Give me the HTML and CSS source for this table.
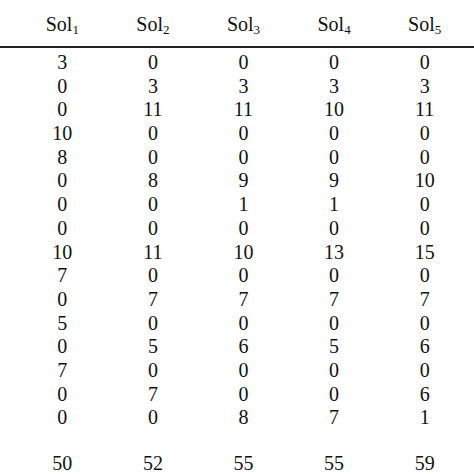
FILE: index.html
```html
<!DOCTYPE html>
<html>
<head>
<meta charset="utf-8">
<link rel="stylesheet" href="styles.css">
</head>
<body>
<div class="table">
  <div class="row head">
    <span></span>
    <span>Sol<sub>1</sub></span>
    <span>Sol<sub>2</sub></span>
    <span>Sol<sub>3</sub></span>
    <span>Sol<sub>4</sub></span>
    <span>Sol<sub>5</sub></span>
  </div>
  <div class="body">
    <div class="row"><span></span><span>3</span><span>0</span><span>0</span><span>0</span><span>0</span></div>
    <div class="row"><span></span><span>0</span><span>3</span><span>3</span><span>3</span><span>3</span></div>
    <div class="row"><span></span><span>0</span><span>11</span><span>11</span><span>10</span><span>11</span></div>
    <div class="row"><span></span><span>10</span><span>0</span><span>0</span><span>0</span><span>0</span></div>
    <div class="row"><span></span><span>8</span><span>0</span><span>0</span><span>0</span><span>0</span></div>
    <div class="row"><span></span><span>0</span><span>8</span><span>9</span><span>9</span><span>10</span></div>
    <div class="row"><span></span><span>0</span><span>0</span><span>1</span><span>1</span><span>0</span></div>
    <div class="row"><span></span><span>0</span><span>0</span><span>0</span><span>0</span><span>0</span></div>
    <div class="row"><span></span><span>10</span><span>11</span><span>10</span><span>13</span><span>15</span></div>
    <div class="row"><span></span><span>7</span><span>0</span><span>0</span><span>0</span><span>0</span></div>
    <div class="row"><span></span><span>0</span><span>7</span><span>7</span><span>7</span><span>7</span></div>
    <div class="row"><span></span><span>5</span><span>0</span><span>0</span><span>0</span><span>0</span></div>
    <div class="row"><span></span><span>0</span><span>5</span><span>6</span><span>5</span><span>6</span></div>
    <div class="row"><span></span><span>7</span><span>0</span><span>0</span><span>0</span><span>0</span></div>
    <div class="row"><span></span><span>0</span><span>7</span><span>0</span><span>0</span><span>6</span></div>
    <div class="row"><span></span><span>0</span><span>0</span><span>8</span><span>7</span><span>1</span></div>
  </div>
  <div class="row total"><span></span><span>50</span><span>52</span><span>55</span><span>55</span><span>59</span></div>
</div>
</body>
</html>
```
FILE: styles.css
```css
html, body {
  margin: 0;
  padding: 0;
  background: #fff;
}
.table {
  width: 474px;
  font-family: "Liberation Serif", "Times New Roman", serif;
  font-size: 20px;
  color: #111;
}
.row {
  display: grid;
  grid-template-columns: 17px repeat(5, 90.6px);
  text-align: center;
  height: 23.7px;
  line-height: 23.7px;
}
.head {
  height: 48px;
  line-height: 20px;
  align-items: start;
  padding-top: 14px;
  box-sizing: border-box;
  border-bottom: 2px solid #222;
}
.head sub {
  font-size: 13px;
  vertical-align: -3px;
  line-height: 0;
}
.body {
  padding-top: 3px;
}
.total {
  margin-top: 22px;
}
```
